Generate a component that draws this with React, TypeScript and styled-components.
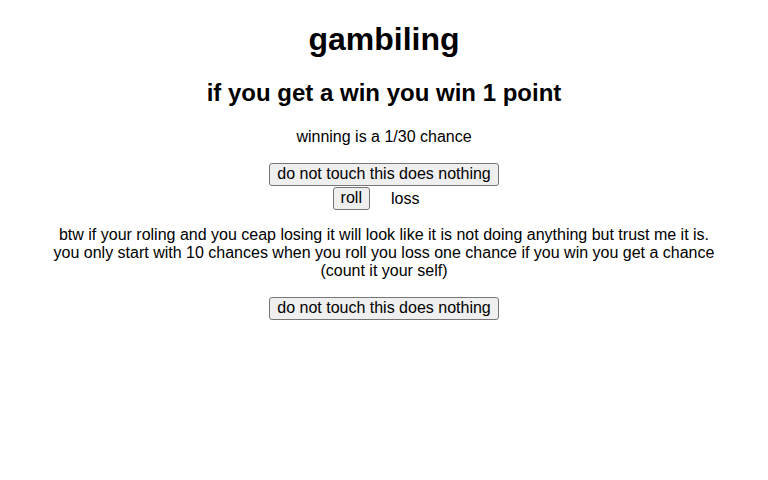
import styled, { createGlobalStyle } from "styled-components";

const GlobalStyle = createGlobalStyle`
    html, body {
        margin: 0;
        padding: 0;
        background: #ffffff;
    }
    body {
        font-family: "Liberation Sans", Arial, sans-serif;
        color: #000000;
    }
`;

const App = () => {
    return (
        <Main>
            <GlobalStyle />
            <Title>gambiling</Title>
            <Subtitle>if you get a win you win 1 point</Subtitle>
            <Odds>winning is a 1/30 chance</Odds>
            <Button>do not touch this does nothing</Button>
            <RollRow>
                <Button>roll</Button>
                <Result>loss</Result>
            </RollRow>
            <Note>
                btw if your roling and you ceap losing it will look like it is not doing anything but trust me it is.
                <br />
                you only start with 10 chances when you roll you loss one chance if you win you get a chance
                <br />
                (count it your self)
            </Note>
            <Button>do not touch this does nothing</Button>
        </Main>
    );
};

export default App;

const Main = styled.div`
    display: flex;
    flex-direction: column;
    align-items: center;
    text-align: center;
    padding: 21px 8px 0;
`;

const Title = styled.h1`
    font-size: 32px;
    font-weight: bold;
    line-height: 37px;
    margin: 0;
`;

const Subtitle = styled.h2`
    font-size: 24px;
    font-weight: bold;
    line-height: 28px;
    margin: 21px 0 0;
`;

const Odds = styled.p`
    font-size: 16px;
    line-height: 18px;
    margin: 21px 0 17px;
`;

const Button = styled.button`
    font-family: "Liberation Sans", Arial, sans-serif;
    font-size: 16px;
    line-height: 18px;
    color: #000000;
    background: #efefef;
    border: 1px solid #767676;
    border-radius: 3px;
    padding: 1px 7px 2px;
`;

const RollRow = styled.div`
    display: flex;
    align-items: center;
    gap: 21px;
    margin-top: 1px;
    margin-right: 16px;
`;

const Result = styled.span`
    font-size: 16px;
    line-height: 18px;
`;

const Note = styled.p`
    font-size: 16px;
    line-height: 18px;
    margin: 16px 0 17px;
`;
